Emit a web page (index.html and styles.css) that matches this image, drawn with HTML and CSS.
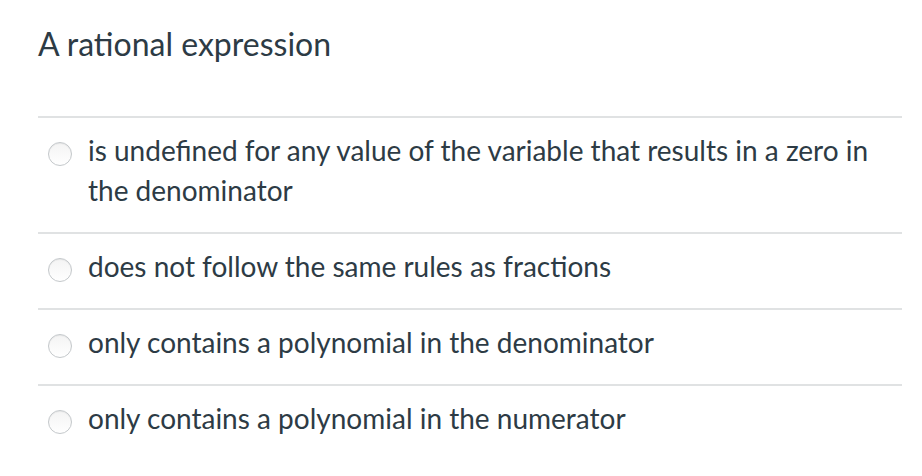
FILE: index.html
```html
<!DOCTYPE html>
<html>
<head>
<meta charset="utf-8">
<link rel="stylesheet" href="styles.css">
</head>
<body>
<div class="question">
  <div class="title">A rational expression</div>
  <div class="answers">
    <div class="answer">
      <span class="radio"></span>
      <span class="label">is undefined for any value of the variable that results in a zero in the denominator</span>
    </div>
    <div class="answer">
      <span class="radio"></span>
      <span class="label">does not follow the same rules as fractions</span>
    </div>
    <div class="answer">
      <span class="radio"></span>
      <span class="label">only contains a polynomial in the denominator</span>
    </div>
    <div class="answer">
      <span class="radio"></span>
      <span class="label">only contains a polynomial in the numerator</span>
    </div>
  </div>
</div>
</body>
</html>
```
FILE: styles.css
```css
html, body {
  margin: 0;
  padding: 0;
  background: #ffffff;
}
body {
  font-family: Lato, "Open Sans", sans-serif;
  color: #2d3b45;
}
.question {
  width: 864px;
  padding-left: 38px;
}
.title {
  font-size: 32px;
  line-height: 40px;
  padding-top: 24px;
  height: 116px;
  box-sizing: border-box;
}
.answer {
  display: flex;
  align-items: flex-start;
  border-top: 2px solid #e0e2e3;
  padding: 12px 0 22px 10px;
}
.radio {
  flex: none;
  width: 22px;
  height: 22px;
  border-radius: 50%;
  border: 1px solid #c4c8cb;
  background: linear-gradient(#f4f4f4, #ffffff);
  box-shadow: inset 0 1px 1px rgba(0,0,0,0.06);
  margin-top: 12px;
  margin-right: 16px;
}
.label {
  font-size: 28px;
  line-height: 40px;
}
```
